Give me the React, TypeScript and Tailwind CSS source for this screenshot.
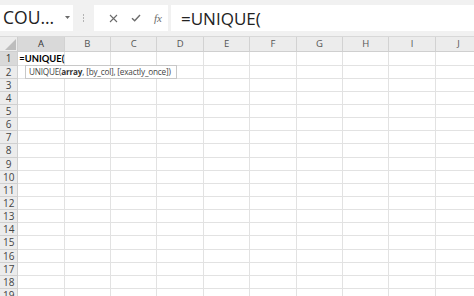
import React from "react";

const COLS = ["A", "B", "C", "D", "E", "F", "G", "H", "I", "J"];
const ROWS = Array.from({ length: 19 }, (_, i) => i + 1);

function CancelIcon() {
  return (
    <svg width="9" height="9" viewBox="0 0 9 9" fill="none">
      <path d="M1 1 L8 8 M8 1 L1 8" stroke="#6b6b6b" strokeWidth="1.1" />
    </svg>
  );
}
function CheckIcon() {
  return (
    <svg width="10" height="8" viewBox="0 0 10 8" fill="none">
      <path d="M1 4.2 L3.7 6.8 L9 1" stroke="#6b6b6b" strokeWidth="1.4" />
    </svg>
  );
}

export default function App() {
  return (
    <div
      className="relative w-[474px] h-[296px] overflow-hidden bg-white"
      style={{ fontFamily: '"Open Sans", "Noto Sans", sans-serif' }}
    >
      {/* toolbar */}
      <div className="h-[37px] bg-[#f1f1f1] border-b border-[#d8d8d8] flex items-start pt-[5px]">
        <div className="w-[73px] h-[26px] bg-white flex items-center relative">
          <span className="pl-[3px] text-[17.5px] leading-none text-[#222]">COU...</span>
          <svg className="absolute left-[65px] top-[11px]" width="5" height="3" viewBox="0 0 5 3">
            <path d="M0 0 L5 0 L2.5 3 Z" fill="#6a6a6a" />
          </svg>
        </div>
        <div className="w-[21px] h-[26px] flex flex-col items-center justify-center gap-[1.5px]">
          <span className="block w-[1.5px] h-[1.5px] bg-[#b4b4b4]" />
          <span className="block w-[1.5px] h-[1.5px] bg-[#b4b4b4]" />
          <span className="block w-[1.5px] h-[1.5px] bg-[#b4b4b4]" />
        </div>
        <div className="w-[74px] h-[26px] bg-white flex items-center">
          <div className="w-[24px] flex justify-end">
            <CancelIcon />
          </div>
          <div className="w-[23px] flex justify-end">
            <CheckIcon />
          </div>
          <div className="w-[21px] flex justify-end">
            <span
              className="text-[11px] italic leading-none text-[#6b6b6b]"
              style={{ fontFamily: '"Liberation Serif", serif' }}
            >
              fx
            </span>
          </div>
        </div>
        <div className="w-[3px]" />
        <div className="flex-1 h-[26px] bg-white flex items-center">
          <span className="pl-[10px] text-[17px] leading-none text-[#222]">=UNIQUE(</span>
        </div>
      </div>

      {/* column headers */}
      <div className="flex h-[15.4px] bg-[#ececec] border-b border-[#cfcfcf]">
        <div className="w-[18.3px] shrink-0 relative border-r border-[#cfcfcf]">
          <svg className="absolute right-[1px] bottom-[1px]" width="11" height="11" viewBox="0 0 11 11">
            <path d="M11 0 L11 11 L0 11 Z" fill="#bdbdbd" />
          </svg>
        </div>
        {COLS.map((c, i) => (
          <div
            key={c}
            className={`w-[46.4px] shrink-0 flex items-center justify-center text-[9.5px] leading-none border-r border-[#d2d2d2] ${
              i === 0 ? "bg-[#d9d9d9] text-[#333]" : "text-[#555]"
            }`}
          >
            {c}
          </div>
        ))}
      </div>

      {/* rows */}
      {ROWS.map((r) => (
        <div key={r} className="flex h-[13.15px]">
          <div
            className={`w-[18.3px] shrink-0 flex items-center justify-center text-[10px] leading-none border-r border-b border-[#d0d0d0] ${
              r === 1 ? "bg-[#d9d9d9] text-[#333]" : "bg-[#ececec] text-[#444]"
            }`}
          >
            {r}
          </div>
          {COLS.map((c, i) => (
            <div
              key={c}
              className="w-[46.4px] shrink-0 border-r border-b border-[#e2e2e2] relative"
            >
              {r === 1 && i === 0 && (
                <div className="absolute inset-0 flex items-center pl-[1px]">
                  <span
                    className="text-[9.4px] font-bold leading-none text-black whitespace-nowrap"
                    style={{ fontFamily: 'Lato, "Open Sans", sans-serif' }}
                  >
                    =UNIQUE(
                  </span>
                  <span className="block w-[1px] h-[10px] bg-[#222] ml-[0.5px]" />
                </div>
              )}
            </div>
          ))}
        </div>
      ))}

      {/* tooltip */}
      <div className="absolute left-[25px] top-[65px] w-[152px] h-[14px] bg-white border border-[#c8c8c8] flex items-center pl-[3px]">
        <span className="text-[8.2px] tracking-[-0.2px] leading-none text-[#444] whitespace-nowrap">
          UNIQUE(<span className="font-bold text-[#333]">array</span>, [by_col], [exactly_once])
        </span>
      </div>
    </div>
  );
}
